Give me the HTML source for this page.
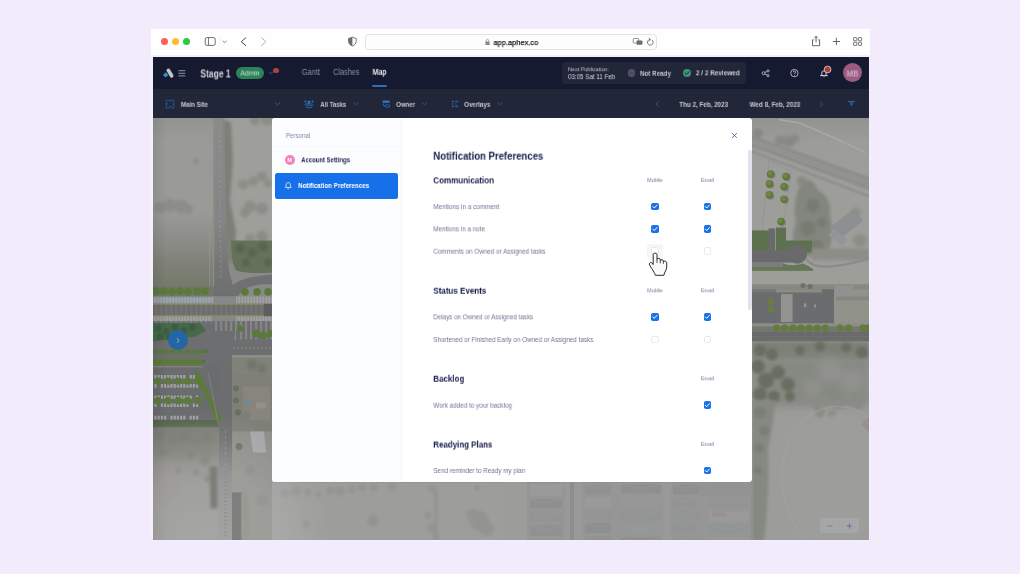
<!DOCTYPE html>
<html>
<head>
<meta charset="utf-8">
<title>Notification Preferences</title>
<style>
html,body{margin:0;padding:0;}
body{width:1020px;height:574px;overflow:hidden;background:#f1ebfb;font-family:"Liberation Sans",sans-serif;position:relative;}
.abs{position:absolute;}
.t{position:absolute;white-space:nowrap;line-height:1;transform-origin:0 50%;will-change:transform;font-family:"Liberation Sans",sans-serif;}
#toolbar{left:151px;top:29.4px;width:719px;height:25.4px;background:#fefefe;}
#nav1{left:153px;top:57.4px;width:716px;height:31.2px;background:#161a31;}
#nav2{left:153px;top:88.5px;width:716px;height:29.3px;background:#222639;}
#map{left:153px;top:117.6px;width:716px;height:422.6px;background:#989995;overflow:hidden;}
#url{left:365.3px;top:34.2px;width:289.6px;height:13.6px;border:0.8px solid #e2e2e4;border-radius:3.5px;background:#fdfdfd;box-sizing:content-box;}
.dot{position:absolute;border-radius:50%;}
#pub{left:562px;top:61.8px;width:184px;height:22.2px;background:#222639;border-radius:3px;}
#modal{left:272.3px;top:117.5px;width:479.9px;height:364.8px;background:#ffffff;border-radius:3px;overflow:hidden;}
#side{left:0;top:0;width:128.5px;height:100%;background:#fcfdfe;border-right:0.6px solid #f6f7fa;}
#btn{left:275.1px;top:172.5px;width:122.7px;height:26.3px;background:#1670e8;border-radius:2.5px;}
.cb{position:absolute;width:7.6px;height:7.6px;border-radius:1.8px;box-sizing:border-box;}
.cb.on{background:#1a73e8;}
.cb.off{background:#fff;border:0.7px solid #e9eaf0;}
svg{position:absolute;overflow:visible;}
</style>
</head>
<body>
<!-- browser toolbar -->
<div class="abs" style="left:151.2px;top:50px;width:718.6px;height:491.4px;background:#f4effc;"></div>
<div id="toolbar" class="abs"></div>
<div class="dot" style="left:161.1px;top:38.2px;width:7px;height:7px;background:#fe5f57;"></div>
<div class="dot" style="left:172.2px;top:38.2px;width:7px;height:7px;background:#febc2e;"></div>
<div class="dot" style="left:183.4px;top:38.2px;width:7px;height:7px;background:#28c840;"></div>
<div id="url" class="abs"></div>
<svg width="1020" height="574" viewBox="0 0 1020 574" style="left:0;top:0">
  <!-- sidebar icon -->
  <rect x="205.2" y="37.6" width="10" height="7.8" rx="1.6" fill="none" stroke="#5d5d5f" stroke-width="0.9"/>
  <line x1="208.5" y1="37.6" x2="208.5" y2="45.4" stroke="#5d5d5f" stroke-width="0.8"/>
  <line x1="219.6" y1="36.5" x2="219.6" y2="46.8" stroke="#ececee" stroke-width="0.6"/>
  <polyline points="222.9,41 224.6,42.7 226.3,41" fill="none" stroke="#6a6a6c" stroke-width="0.8" stroke-linecap="round" stroke-linejoin="round"/>
  <polyline points="245.8,37.8 241.3,41.7 245.8,45.6" fill="none" stroke="#4a4a4c" stroke-width="1" stroke-linecap="round" stroke-linejoin="round"/>
  <polyline points="261.5,37.8 266,41.7 261.5,45.6" fill="none" stroke="#b4b4b6" stroke-width="1" stroke-linecap="round" stroke-linejoin="round"/>
  <!-- shield -->
  <path d="M352.4 37.2 L356.2 38.5 V41.5 C356.2 43.6 354.6 45.2 352.4 46 C350.2 45.2 348.6 43.6 348.6 41.5 V38.5 Z" fill="none" stroke="#5a5a5c" stroke-width="0.8"/>
  <path d="M352.4 37.2 L348.6 38.5 V41.5 C348.6 43.6 350.2 45.2 352.4 46 Z" fill="#6a6a6c"/>
  <!-- lock -->
  <rect x="485.4" y="41.6" width="4.2" height="3.5" rx="0.6" fill="#88888b"/>
  <path d="M486.3 41.8 V40.6 A1.2 1.2 0 0 1 488.7 40.6 V41.8" fill="none" stroke="#88888b" stroke-width="0.7"/>
  <!-- translate -->
  <rect x="633.2" y="38.5" width="5.6" height="4.6" rx="0.8" fill="none" stroke="#6c6c6e" stroke-width="0.7"/>
  <rect x="636.6" y="40.4" width="5.8" height="4.4" rx="0.8" fill="#6c6c6e"/>
  <!-- refresh -->
  <path d="M652.6 40.4 A2.9 2.9 0 1 1 649.6 39.4" fill="none" stroke="#5a5a5c" stroke-width="0.8" stroke-linecap="round"/>
  <polyline points="649,38.2 650.6,39.5 649.3,41" fill="none" stroke="#5a5a5c" stroke-width="0.7" stroke-linecap="round" stroke-linejoin="round"/>
  <!-- share -->
  <path d="M813.9 39.9 H812.5 V45.7 H819.6 V39.9 H818.2" fill="none" stroke="#555557" stroke-width="0.9" stroke-linejoin="round"/>
  <line x1="816.05" y1="36.4" x2="816.05" y2="42.4" stroke="#555557" stroke-width="0.9"/>
  <polyline points="814.4,37.9 816.05,36.3 817.7,37.9" fill="none" stroke="#555557" stroke-width="0.9" stroke-linejoin="round"/>
  <!-- plus -->
  <line x1="832.8" y1="41.5" x2="840" y2="41.5" stroke="#555557" stroke-width="0.9"/>
  <line x1="836.4" y1="37.9" x2="836.4" y2="45.1" stroke="#555557" stroke-width="0.9"/>
  <!-- grid -->
  <rect x="853.6" y="37.6" width="3.2" height="3.2" rx="0.5" fill="none" stroke="#555557" stroke-width="0.8"/>
  <rect x="858.4" y="37.6" width="3.2" height="3.2" rx="0.5" fill="none" stroke="#555557" stroke-width="0.8"/>
  <rect x="853.6" y="42.2" width="3.2" height="3.2" rx="0.5" fill="none" stroke="#555557" stroke-width="0.8"/>
  <rect x="858.4" y="42.2" width="3.2" height="3.2" rx="0.5" fill="none" stroke="#555557" stroke-width="0.8"/>
</svg>

<!-- app nav -->
<div id="nav1" class="abs"></div>
<div id="nav2" class="abs"></div>
<div id="pub" class="abs"></div>
<div class="abs" style="left:235.7px;top:66.9px;width:28.3px;height:12.1px;border-radius:6.1px;background:#2e8259;"></div>
<div class="abs" style="left:372.4px;top:85px;width:14.3px;height:1.8px;background:#2b72b8;border-radius:1px;"></div>
<div class="dot" style="left:273.2px;top:67.8px;width:5.4px;height:5.4px;background:#ab443f;"></div>
<div class="dot" style="left:628.1px;top:69.3px;width:7.4px;height:7.4px;background:#515364;"></div>
<div class="dot" style="left:683.3px;top:69.3px;width:7.4px;height:7.4px;background:#3a9073;"></div>
<div class="dot" style="left:842.9px;top:63.3px;width:19.2px;height:19.2px;background:#9c5b82;"></div>
<svg width="1020" height="574" viewBox="0 0 1020 574" style="left:0;top:0">
  <!-- logo -->
  <line x1="168.4" y1="70.4" x2="171.6" y2="75.8" stroke="#c4c5c9" stroke-width="3.7" stroke-linecap="round"/>
  <path d="M165.7 72.2 L168.4 74.9 L165.7 77.6 L163 74.9 Z" fill="#2b93c6"/>
  <!-- hamburger -->
  <line x1="178.4" y1="70.7" x2="185.3" y2="70.7" stroke="#9d9fac" stroke-width="0.9"/>
  <line x1="178.4" y1="73.3" x2="185.3" y2="73.3" stroke="#9d9fac" stroke-width="0.9"/>
  <line x1="178.4" y1="75.9" x2="185.3" y2="75.9" stroke="#9d9fac" stroke-width="0.9"/>
  <!-- chevron next to admin -->
  <polyline points="269.2,72.2 270.9,73.8 272.6,72.2" fill="none" stroke="#2b6db4" stroke-width="0.8" stroke-linecap="round" stroke-linejoin="round"/>
  <!-- gray dot minus / green check -->
  <line x1="630.2" y1="73" x2="633.4" y2="73" stroke="#3a3d4e" stroke-width="0.9"/>
  <polyline points="685.2,73.1 686.5,74.4 688.9,71.8" fill="none" stroke="#1d2a36" stroke-width="0.9" stroke-linecap="round" stroke-linejoin="round"/>
  <!-- share nodes -->
  <circle cx="763.6" cy="73.2" r="1.5" fill="none" stroke="#c9cad2" stroke-width="0.8"/>
  <circle cx="768" cy="70.9" r="1.1" fill="none" stroke="#c9cad2" stroke-width="0.8"/>
  <circle cx="768" cy="75.6" r="1.1" fill="none" stroke="#c9cad2" stroke-width="0.8"/>
  <line x1="764.9" y1="72.5" x2="766.8" y2="71.5" stroke="#c9cad2" stroke-width="0.8"/>
  <line x1="764.9" y1="73.9" x2="766.8" y2="75" stroke="#c9cad2" stroke-width="0.8"/>
  <!-- help -->
  <circle cx="794.4" cy="73.1" r="3.7" fill="none" stroke="#d0d1d8" stroke-width="0.8"/>
  <path d="M793.2 72.1 A1.2 1.2 0 1 1 794.4 73.4 V74.1" fill="none" stroke="#d0d1d8" stroke-width="0.8"/>
  <circle cx="794.4" cy="75.3" r="0.45" fill="#d0d1d8"/>
  <!-- bell -->
  <path d="M820.5 75.6 H827.3 M821.8 75.6 V73.2 A2.1 2.4 0 0 1 826 73.2 V75.6" fill="none" stroke="#dcdde3" stroke-width="0.95" stroke-linejoin="round" stroke-linecap="round"/>
  <path d="M823.2 76.4 L823.9 77.1 L824.6 76.4" fill="none" stroke="#cfd0d7" stroke-width="0.7"/>
  <circle cx="827.6" cy="69.5" r="3.4" fill="#b03c36" stroke="#d5d5da" stroke-width="0.8"/>
  <!-- nav2 icons -->
  <path d="M166.2 100.3 H174 V108.2 H171.5 V106.6 H169.2 V108.2 H166.2 Z M166.2 104 H168 M172.2 104 H174 M170.1 100.3 V102" fill="none" stroke="#1f5f9f" stroke-width="0.8"/>
  <polyline points="275.3,102.9 277.5,104.9 279.7,102.9" fill="none" stroke="#2566a8" stroke-width="0.8" stroke-linecap="round" stroke-linejoin="round"/>
  <!-- all tasks icon -->
  <circle cx="309" cy="102" r="1.5" fill="#2a72bb"/>
  <circle cx="305.4" cy="101.4" r="1" fill="#2a72bb"/>
  <circle cx="312.6" cy="101.4" r="1" fill="#2a72bb"/>
  <path d="M304.5 104.4 Q309 102.6 313.5 104.4" fill="none" stroke="#2a72bb" stroke-width="0.9"/>
  <ellipse cx="309" cy="106.4" rx="3.1" ry="1.4" fill="none" stroke="#2a72bb" stroke-width="0.9"/>
  <polyline points="353.4,102.9 355.6,104.9 357.8,102.9" fill="none" stroke="#2566a8" stroke-width="0.8" stroke-linecap="round" stroke-linejoin="round"/>
  <!-- owner icon -->
  <rect x="382.4" y="100.4" width="7.4" height="2.6" rx="1" fill="#2a72bb"/>
  <path d="M383.4 103.6 V105.6 H385.4" fill="none" stroke="#2a72bb" stroke-width="0.8"/>
  <ellipse cx="387.6" cy="106" rx="2.2" ry="1.3" fill="none" stroke="#2a72bb" stroke-width="0.8"/>
  <polyline points="422.3,102.9 424.5,104.9 426.7,102.9" fill="none" stroke="#2566a8" stroke-width="0.8" stroke-linecap="round" stroke-linejoin="round"/>
  <!-- overlays icon -->
  <path d="M452.6 101.3 H457.6 L455.2 103.8 L457.6 106.6 H452.6 Z" fill="none" stroke="#1f5f9f" stroke-width="0.8" stroke-linejoin="round"/>
  <circle cx="452.6" cy="101.3" r="0.8" fill="#1f5f9f"/><circle cx="457.6" cy="101.3" r="0.8" fill="#1f5f9f"/>
  <circle cx="452.6" cy="106.6" r="0.8" fill="#1f5f9f"/><circle cx="457.6" cy="106.6" r="0.8" fill="#1f5f9f"/>
  <polyline points="497.4,102.9 499.6,104.9 501.8,102.9" fill="none" stroke="#2566a8" stroke-width="0.8" stroke-linecap="round" stroke-linejoin="round"/>
  <!-- date arrows -->
  <polyline points="658.5,101.7 656.2,104.1 658.5,106.5" fill="none" stroke="#2566a8" stroke-width="0.8" stroke-linecap="round" stroke-linejoin="round"/>
  <polyline points="820.4,101.7 822.7,104.1 820.4,106.5" fill="none" stroke="#2566a8" stroke-width="0.8" stroke-linecap="round" stroke-linejoin="round"/>
  <!-- filter -->
  <path d="M847.8 101 H855.2 L853.6 102.6 H849.4 Z M849.9 103.3 H853.1 L852.2 104.9 H850.8 Z M851 105.5 H852 L851.5 107.2 Z" fill="#2b65a6"/>
</svg>

<!-- map -->
<div id="map" class="abs">
<svg width="716" height="422.6" viewBox="153 117.6 716 422.6" style="left:0;top:0">
<defs>
<filter id="b1" x="-20%" y="-20%" width="140%" height="140%"><feGaussianBlur stdDeviation="0.6"/></filter>
<filter id="b2" x="-20%" y="-20%" width="140%" height="140%"><feGaussianBlur stdDeviation="1.6"/></filter>
<filter id="b4" x="-30%" y="-30%" width="160%" height="160%"><feGaussianBlur stdDeviation="4"/></filter>
<linearGradient id="lf" x1="0" y1="0" x2="0" y2="1"><stop offset="0" stop-color="#acada9"/><stop offset="0.14" stop-color="#b7b8b4"/><stop offset="0.55" stop-color="#b6b7b2"/><stop offset="0.74" stop-color="#a0a29a"/><stop offset="0.88" stop-color="#8d9182"/><stop offset="1" stop-color="#828774"/></linearGradient>
<linearGradient id="lb" x1="0" y1="0" x2="0" y2="1"><stop offset="0" stop-color="#8a8d82"/><stop offset="0.28" stop-color="#9b9c95"/><stop offset="0.5" stop-color="#a9aaa5"/><stop offset="1" stop-color="#abaca8"/></linearGradient>
<linearGradient id="rd" x1="0" y1="0" x2="0" y2="1"><stop offset="0" stop-color="#a0a1a1"/><stop offset="0.25" stop-color="#969797"/><stop offset="0.34" stop-color="#838485"/><stop offset="0.42" stop-color="#77787a"/><stop offset="0.76" stop-color="#747577"/><stop offset="0.86" stop-color="#9a9b9a"/><stop offset="1" stop-color="#a8a9a6"/></linearGradient>
<radialGradient id="hz1" cx="205" cy="535" r="125" gradientUnits="userSpaceOnUse"><stop offset="0" stop-color="#fff" stop-opacity="0.33"/><stop offset="0.55" stop-color="#fff" stop-opacity="0.24"/><stop offset="1" stop-color="#fff" stop-opacity="0"/></radialGradient>
<radialGradient id="hz2" cx="850" cy="545" r="75" gradientUnits="userSpaceOnUse"><stop offset="0" stop-color="#fff" stop-opacity="0.17"/><stop offset="0.6" stop-color="#fff" stop-opacity="0.1"/><stop offset="1" stop-color="#fff" stop-opacity="0"/></radialGradient>
<linearGradient id="rt" x1="0" y1="0" x2="0" y2="1"><stop offset="0" stop-color="#abaca8"/><stop offset="0.16" stop-color="#b9bab6"/><stop offset="1" stop-color="#bbbcb8"/></linearGradient>
<linearGradient id="vg" x1="0" y1="0" x2="1" y2="0"><stop offset="0" stop-color="#000" stop-opacity="0.1"/><stop offset="1" stop-color="#000" stop-opacity="0"/></linearGradient>
<pattern id="hatch" width="3" height="8" patternUnits="userSpaceOnUse"><rect width="3" height="8" fill="#bebfc0"/><rect width="1.3" height="8" fill="#a6a7a8"/></pattern>
<pattern id="vstripe" width="5" height="8" patternUnits="userSpaceOnUse"><rect width="2.4" height="8" fill="#fff" opacity="0.07"/></pattern>
<pattern id="vstripe2" width="5" height="8" patternUnits="userSpaceOnUse"><rect width="2.2" height="8" fill="#fff" opacity="0.25"/></pattern>
<pattern id="cars" width="3.2" height="10" patternUnits="userSpaceOnUse"><rect width="3.2" height="10" fill="#727375"/><rect x="0.4" y="0.3" width="2.2" height="3.7" fill="#c2c3c5"/></pattern>
</defs>
<rect x="153" y="117" width="716" height="424" fill="#a0a19c"/>
<rect x="153" y="117" width="60" height="170" fill="url(#lf)"/>
<g filter="url(#b2)" fill="#a2a49c">
<circle cx="160" cy="207" r="6"/>
<circle cx="170" cy="205" r="7"/>
<circle cx="181" cy="206" r="7"/>
<circle cx="188" cy="209" r="5"/>
<circle cx="196" cy="161" r="3"/>
</g>
<rect x="224" y="117" width="48" height="125" fill="#bcbdb8"/>
<g filter="url(#b2)" fill="#a1a59a">
<circle cx="262" cy="176" r="5"/>
<circle cx="253" cy="181" r="5"/>
<circle cx="243" cy="184" r="5"/>
<circle cx="268" cy="183" r="4"/>
<circle cx="250" cy="206" r="6"/>
<circle cx="262" cy="208" r="6"/>
<circle cx="245" cy="212" r="5"/>
<circle cx="267" cy="119" r="6"/>
<circle cx="255" cy="120" r="5"/>
<circle cx="262" cy="236" r="6"/>
<circle cx="250" cy="238" r="5"/>
</g>
<path d="M223 118 L231 122 L233 160 L230 200 L236 230 L234 262 L224 262 Z" fill="#8c9186" filter="url(#b2)"/>
<path d="M231 240 H272 V272 Q250 274 236 270 Q231 262 231 240 Z" fill="#6c7c5c" filter="url(#b1)"/>
<g filter="url(#b2)" fill="#596b4c">
<circle cx="240" cy="248" r="5"/>
<circle cx="252" cy="252" r="5"/>
<circle cx="263" cy="246" r="5"/>
<circle cx="246" cy="262" r="4"/>
<circle cx="268" cy="262" r="4"/>
</g>
<line x1="209.8" y1="118" x2="209.8" y2="287" stroke="#b3b4ad" stroke-width="0.7"/>
<line x1="213.2" y1="118" x2="213.2" y2="287" stroke="#aeb0a9" stroke-width="0.5"/>
<path d="M215.6 117 H223 L226 240 L229 270 L236 296 L236 322 L234 345 L232.3 372 L232.3 541 H218.6 L218.6 430 L214 372 L211 340 L211 322 L214 296 L214.4 240 Z" fill="url(#rd)"/>
<line x1="219.6" y1="130" x2="220.8" y2="280" stroke="#c4c5c5" stroke-width="0.6" stroke-dasharray="2 3"/>
<line x1="225.5" y1="430" x2="225.5" y2="520" stroke="#b6b7b7" stroke-width="0.6" stroke-dasharray="2.5 3"/>
<path d="M229 292 Q231 277 272 274 V284 Q244 283 238 296 Z" fill="#787a7b"/>
<rect x="153" y="286" width="61" height="11" fill="#7d8475"/>
<g fill="#5d8733" filter="url(#b1)">
<circle cx="156" cy="290.8" r="4"/>
<circle cx="164" cy="290.6" r="4"/>
<circle cx="172" cy="291.2" r="4"/>
<circle cx="180" cy="290.5" r="4"/>
<circle cx="188" cy="291.0" r="4"/>
<circle cx="197" cy="290.8" r="4"/>
<circle cx="205" cy="290.5" r="4"/>
<circle cx="245" cy="291.5" r="3.8"/>
<circle cx="257" cy="291.5" r="3.8"/>
<circle cx="268" cy="291.5" r="3.8"/>
</g>
<rect x="153" y="296.2" width="119" height="7.4" fill="url(#hatch)"/>
<rect x="153" y="298.2" width="58.5" height="3.4" fill="#a6cbea" opacity="0.55"/>
<rect x="153" y="303.4" width="119" height="12.4" fill="#757678"/>
<rect x="153" y="303.4" width="119" height="12.4" fill="url(#vstripe)"/>
<rect x="153" y="303.3" width="112" height="1.3" fill="#9e9653"/>
<rect x="153" y="314.5" width="112" height="1.3" fill="#9e9653"/>
<rect x="153" y="315.9" width="119" height="4.8" fill="url(#hatch)"/>
<rect x="153" y="320.7" width="119" height="10" fill="#757678"/>
<rect x="153" y="320.7" width="119" height="10" fill="url(#vstripe2)"/>
<rect x="214" y="296.2" width="22" height="7.2" fill="#9a9b9c"/>
<rect x="212" y="315.9" width="24" height="4.8" fill="#9a9b9c"/>
<rect x="264" y="303.4" width="8" height="12.4" fill="#5f6062"/>
<rect x="153" y="322" width="61" height="50" fill="#767779"/>
<path d="M153 322.5 H200 L206 330 L196 336 L153 341 Z" fill="#3e7043" filter="url(#b1)"/>
<g fill="#305f37" filter="url(#b1)">
<circle cx="158" cy="328" r="3.4"/>
<circle cx="166" cy="331" r="3.4"/>
<circle cx="175" cy="327" r="3.4"/>
<circle cx="184" cy="330" r="3.4"/>
<circle cx="192" cy="327" r="3.4"/>
<circle cx="160" cy="336" r="3.4"/>
<circle cx="170" cy="337" r="3.4"/>
</g>
<rect x="153" y="349.6" width="55" height="3" fill="#61793f"/>
<rect x="153" y="359.5" width="52" height="3.4" fill="#557a3f"/>
<g fill="#5d8a2c" filter="url(#b1)">
<circle cx="160" cy="351.7" r="2.6"/>
<circle cx="168" cy="351.7" r="2.6"/>
<circle cx="176" cy="351.7" r="2.6"/>
<circle cx="184" cy="351.7" r="2.6"/>
<circle cx="192" cy="351.7" r="2.6"/>
<circle cx="200" cy="351.7" r="2.6"/>
<circle cx="157" cy="361.8" r="3.4"/>
<circle cx="164" cy="361.8" r="3.4"/>
<circle cx="171" cy="361.8" r="3.4"/>
<circle cx="178" cy="361.8" r="3.4"/>
<circle cx="185" cy="361.8" r="3.4"/>
<circle cx="192" cy="361.8" r="3.4"/>
<circle cx="199" cy="361.8" r="3.4"/>
</g>
<rect x="236" y="330" width="36" height="11" fill="#757678"/>
<rect x="238" y="330" width="34" height="9" fill="url(#vstripe2)"/>
<rect x="230.6" y="340" width="42" height="15" fill="#767779"/>
<line x1="233" y1="347.5" x2="272" y2="347.5" stroke="#b5b6b6" stroke-width="0.6" stroke-dasharray="2 2"/>
<g fill="#5d8733" filter="url(#b1)">
<circle cx="240" cy="328" r="3.2"/>
<circle cx="256" cy="333" r="4"/>
<circle cx="263" cy="335" r="4"/>
<circle cx="270" cy="333" r="3.5"/>
</g>
<rect x="232" y="355" width="40" height="18" fill="#8f9484"/>
<rect x="232" y="355" width="40" height="2" fill="#a8a9a6"/>
<g filter="url(#b2)" fill="#7c836f"><circle cx="252" cy="364" r="5"/><circle cx="262" cy="368" r="4"/></g>
<rect x="153" y="366" width="66" height="61" fill="#737476"/>
<rect x="153" y="366" width="50" height="0.8" fill="#a9aaaa"/>
<path d="M154.4 374.6h2.2v3.7h-2.2zM157.6 374.6h2.2v3.7h-2.2zM160.8 374.6h2.2v3.7h-2.2zM164.0 374.6h2.2v3.7h-2.2zM167.2 374.6h2.2v3.7h-2.2zM170.4 374.6h2.2v3.7h-2.2zM173.6 374.6h2.2v3.7h-2.2zM176.8 374.6h2.2v3.7h-2.2zM180.0 374.6h2.2v3.7h-2.2zM183.2 374.6h2.2v3.7h-2.2zM189.6 374.6h2.2v3.7h-2.2zM192.8 374.6h2.2v3.7h-2.2zM154.4 383.7h2.2v3.7h-2.2zM160.8 383.7h2.2v3.7h-2.2zM164.0 383.7h2.2v3.7h-2.2zM167.2 383.7h2.2v3.7h-2.2zM170.4 383.7h2.2v3.7h-2.2zM173.6 383.7h2.2v3.7h-2.2zM176.8 383.7h2.2v3.7h-2.2zM180.0 383.7h2.2v3.7h-2.2zM183.2 383.7h2.2v3.7h-2.2zM186.4 383.7h2.2v3.7h-2.2zM189.6 383.7h2.2v3.7h-2.2zM192.8 383.7h2.2v3.7h-2.2zM196.0 383.7h2.2v3.7h-2.2zM154.4 395h2.2v3.7h-2.2zM157.6 395h2.2v3.7h-2.2zM160.8 395h2.2v3.7h-2.2zM164.0 395h2.2v3.7h-2.2zM167.2 395h2.2v3.7h-2.2zM170.4 395h2.2v3.7h-2.2zM173.6 395h2.2v3.7h-2.2zM176.8 395h2.2v3.7h-2.2zM180.0 395h2.2v3.7h-2.2zM183.2 395h2.2v3.7h-2.2zM186.4 395h2.2v3.7h-2.2zM189.6 395h2.2v3.7h-2.2zM196.0 395h2.2v3.7h-2.2zM154.4 403h2.2v3.7h-2.2zM160.8 403h2.2v3.7h-2.2zM164.0 403h2.2v3.7h-2.2zM167.2 403h2.2v3.7h-2.2zM170.4 403h2.2v3.7h-2.2zM173.6 403h2.2v3.7h-2.2zM176.8 403h2.2v3.7h-2.2zM180.0 403h2.2v3.7h-2.2zM183.2 403h2.2v3.7h-2.2zM186.4 403h2.2v3.7h-2.2zM192.8 403h2.2v3.7h-2.2zM196.0 403h2.2v3.7h-2.2zM154.4 415.4h2.2v3.7h-2.2zM157.6 415.4h2.2v3.7h-2.2zM160.8 415.4h2.2v3.7h-2.2zM164.0 415.4h2.2v3.7h-2.2zM170.4 415.4h2.2v3.7h-2.2zM173.6 415.4h2.2v3.7h-2.2zM176.8 415.4h2.2v3.7h-2.2zM180.0 415.4h2.2v3.7h-2.2zM183.2 415.4h2.2v3.7h-2.2zM189.6 415.4h2.2v3.7h-2.2zM192.8 415.4h2.2v3.7h-2.2zM196.0 415.4h2.2v3.7h-2.2z" fill="#bfc0c2"/>
<g fill="#5d8a2c" filter="url(#b1)">
<circle cx="158" cy="380.7" r="3.7"/>
<circle cx="168" cy="380.7" r="3.7"/>
<circle cx="178.3" cy="380.7" r="3.7"/>
<circle cx="187.4" cy="380.7" r="3.7"/>
<circle cx="197.6" cy="380.7" r="3.7"/>
<circle cx="158" cy="400.4" r="3.7"/>
<circle cx="168" cy="400.4" r="3.7"/>
<circle cx="178.3" cy="400.4" r="3.7"/>
<circle cx="187.4" cy="400.4" r="3.7"/>
<circle cx="197.6" cy="400.4" r="3.7"/>
<circle cx="198.0" cy="375.5" r="3.3"/>
<circle cx="201.3" cy="382.5" r="3.3"/>
<circle cx="204.7" cy="389.5" r="3.3"/>
<circle cx="208.0" cy="396.5" r="3.3"/>
<circle cx="211.3" cy="403.5" r="3.3"/>
<circle cx="214.7" cy="410.5" r="3.3"/>
<circle cx="218.0" cy="417.5" r="3.3"/>
</g>
<path d="M153 419.7 H216 L218.6 427 H153 Z" fill="#506b46"/>
<path d="M208 372 Q212 390 217.6 420" fill="none" stroke="#a3a4a4" stroke-width="0.6"/>
<rect x="232.3" y="431" width="40" height="110" fill="#a4a59f"/>
<rect x="232.3" y="373" width="40" height="58" fill="#8e9085"/>
<path d="M243 386 H270 V420 H250 V410 H243 Z" fill="#9c988b" filter="url(#b1)"/>
<rect x="244.5" y="398" width="6" height="6.5" fill="#7f9cb0"/>
<rect x="256" y="402" width="10" height="6" fill="#a9a69c"/>
<path d="M250 431 H264 L266 452 H253 Z" fill="#c6c9cb" filter="url(#b1)"/>
<g filter="url(#b1)" fill="#6f7a62"><circle cx="236" cy="388" r="3"/><circle cx="236" cy="400" r="3"/><circle cx="238" cy="412" r="3"/><circle cx="239" cy="446" r="3.5"/></g>
<rect x="153" y="427" width="65.6" height="114" fill="url(#lb)"/>
<rect x="153" y="428" width="65" height="30" fill="#858a7c" filter="url(#b4)" opacity="0.75"/>
<g filter="url(#b2)" fill="#7f8476" opacity="0.7">
<circle cx="160" cy="436" r="4"/>
<circle cx="172" cy="440" r="4"/>
<circle cx="185" cy="437" r="5"/>
<circle cx="197" cy="441" r="4"/>
<circle cx="208" cy="438" r="4"/>
<circle cx="164" cy="452" r="4"/>
<circle cx="190" cy="455" r="4"/>
<circle cx="205" cy="460" r="5"/>
<circle cx="208" cy="478" r="4"/>
<circle cx="196" cy="472" r="3"/>
<circle cx="178" cy="470" r="3"/>
</g>
<ellipse cx="166" cy="482" rx="12" ry="24" fill="#a79d98" opacity="0.55" filter="url(#b4)"/>
<g filter="url(#b2)" fill="#989a93"><circle cx="250" cy="470" r="5"/><circle cx="262" cy="500" r="6"/></g>
<rect x="272" y="482" width="250" height="59" fill="#bbbcb9"/>
<g filter="url(#b2)" fill="#adaeab">
<circle cx="285" cy="493" r="4"/>
<circle cx="296" cy="491" r="5"/>
<circle cx="308" cy="492" r="4"/>
<circle cx="318" cy="494" r="3"/>
<circle cx="330" cy="490" r="4"/>
<circle cx="340" cy="491" r="5"/>
<circle cx="352" cy="489" r="4"/>
<circle cx="362" cy="487" r="4"/>
<circle cx="374" cy="487" r="4"/>
<circle cx="392" cy="487" r="4"/>
<circle cx="432" cy="488" r="4"/>
<circle cx="477" cy="487" r="3"/>
<circle cx="306" cy="524" r="4"/>
<circle cx="373" cy="520" r="6"/>
<circle cx="479" cy="520" r="10"/>
<circle cx="486" cy="528" r="8"/>
<circle cx="472" cy="514" r="6"/>
<circle cx="428" cy="515" r="4"/>
<circle cx="432" cy="527" r="5"/>
<circle cx="436" cy="537" r="4"/>
<rect x="434" y="490" width="4" height="50" />
</g>
<rect x="520" y="482" width="232" height="59" fill="#b0b1b0"/>
<rect x="505" y="482" width="22" height="59" fill="#b9bab7"/>
<g filter="url(#b1)">
<rect x="530" y="484" width="32" height="11" fill="#b6b7b7"/>
<path d="M530 484 L546.0 489.5 L562 484" fill="none" stroke="#bbbcbb" stroke-width="0.4"/>
<rect x="530" y="498.5" width="32" height="9" fill="#a5a6a6"/>
<path d="M530 498.5 L546.0 503.0 L562 498.5" fill="none" stroke="#bbbcbb" stroke-width="0.4"/>
<rect x="530" y="511.0" width="32" height="10" fill="#adaeae"/>
<path d="M530 511.0 L546.0 516.0 L562 511.0" fill="none" stroke="#bbbcbb" stroke-width="0.4"/>
<rect x="530" y="524.5" width="32" height="11" fill="#a9aaaa"/>
<path d="M530 524.5 L546.0 530.0 L562 524.5" fill="none" stroke="#bbbcbb" stroke-width="0.4"/>
<rect x="585" y="484" width="26" height="10" fill="#a9aaaa"/>
<path d="M585 484 L598.0 489.0 L611 484" fill="none" stroke="#bbbcbb" stroke-width="0.4"/>
<rect x="585" y="497.5" width="26" height="9" fill="#b6b7b7"/>
<path d="M585 497.5 L598.0 502.0 L611 497.5" fill="none" stroke="#bbbcbb" stroke-width="0.4"/>
<rect x="585" y="510.0" width="26" height="9" fill="#adaeae"/>
<path d="M585 510.0 L598.0 514.5 L611 510.0" fill="none" stroke="#bbbcbb" stroke-width="0.4"/>
<rect x="585" y="522.5" width="26" height="10" fill="#a5a6a6"/>
<path d="M585 522.5 L598.0 527.5 L611 522.5" fill="none" stroke="#bbbcbb" stroke-width="0.4"/>
<rect x="585" y="536.0" width="26" height="10" fill="#a9aaaa"/>
<path d="M585 536.0 L598.0 541.0 L611 536.0" fill="none" stroke="#bbbcbb" stroke-width="0.4"/>
<rect x="621" y="484" width="40" height="9" fill="#a5a6a6"/>
<path d="M621 484 L641.0 488.5 L661 484" fill="none" stroke="#bbbcbb" stroke-width="0.4"/>
<rect x="621" y="496.5" width="40" height="10" fill="#b1b2b2"/>
<path d="M621 496.5 L641.0 501.5 L661 496.5" fill="none" stroke="#bbbcbb" stroke-width="0.4"/>
<rect x="621" y="510.0" width="40" height="10" fill="#adaeae"/>
<path d="M621 510.0 L641.0 515.0 L661 510.0" fill="none" stroke="#bbbcbb" stroke-width="0.4"/>
<rect x="621" y="523.5" width="40" height="10" fill="#b1b2b2"/>
<path d="M621 523.5 L641.0 528.5 L661 523.5" fill="none" stroke="#bbbcbb" stroke-width="0.4"/>
<rect x="621" y="537.0" width="40" height="10" fill="#a5a6a6"/>
<path d="M621 537.0 L641.0 542.0 L661 537.0" fill="none" stroke="#bbbcbb" stroke-width="0.4"/>
<rect x="673" y="484" width="26" height="10" fill="#a5a6a6"/>
<path d="M673 484 L686.0 489.0 L699 484" fill="none" stroke="#bbbcbb" stroke-width="0.4"/>
<rect x="673" y="497.5" width="26" height="9" fill="#adaeae"/>
<path d="M673 497.5 L686.0 502.0 L699 497.5" fill="none" stroke="#bbbcbb" stroke-width="0.4"/>
<rect x="673" y="510.0" width="26" height="9" fill="#adaeae"/>
<path d="M673 510.0 L686.0 514.5 L699 510.0" fill="none" stroke="#bbbcbb" stroke-width="0.4"/>
<rect x="673" y="522.5" width="26" height="9" fill="#adaeae"/>
<path d="M673 522.5 L686.0 527.0 L699 522.5" fill="none" stroke="#bbbcbb" stroke-width="0.4"/>
<rect x="673" y="535.0" width="26" height="11" fill="#adaeae"/>
<path d="M673 535.0 L686.0 540.5 L699 535.0" fill="none" stroke="#bbbcbb" stroke-width="0.4"/>
<rect x="709" y="484" width="40" height="9" fill="#a5a6a6"/>
<path d="M709 484 L729.0 488.5 L749 484" fill="none" stroke="#bbbcbb" stroke-width="0.4"/>
<rect x="709" y="496.5" width="40" height="11" fill="#adaeae"/>
<path d="M709 496.5 L729.0 502.0 L749 496.5" fill="none" stroke="#bbbcbb" stroke-width="0.4"/>
<rect x="709" y="511.0" width="40" height="10" fill="#b6b7b7"/>
<path d="M709 511.0 L729.0 516.0 L749 511.0" fill="none" stroke="#bbbcbb" stroke-width="0.4"/>
<rect x="709" y="524.5" width="40" height="9" fill="#adaeae"/>
<path d="M709 524.5 L729.0 529.0 L749 524.5" fill="none" stroke="#bbbcbb" stroke-width="0.4"/>
<rect x="709" y="537.0" width="40" height="10" fill="#b1b2b2"/>
<path d="M709 537.0 L729.0 542.0 L749 537.0" fill="none" stroke="#bbbcbb" stroke-width="0.4"/>
<rect x="565" y="482" width="17" height="59" fill="#b4b5b4"/>
<rect x="663" y="482" width="8" height="59" fill="#b4b5b4"/>
<rect x="570" y="482" width="4" height="59" fill="#a3a4a4"/>
<rect x="700" y="484" width="50" height="12" fill="#abacac"/>
<rect x="712" y="512" width="14" height="4" fill="#b8aaa2"/>
</g>
<rect x="752" y="117" width="117" height="154" fill="url(#rt)"/>
<path d="M752 134 L869 176 V190 L752 147 Z" fill="#abaca8" filter="url(#b1)"/>
<path d="M752 137 L869 179 M752 144.5 L869 187" stroke="#9d9e9a" stroke-width="0.9" fill="none"/>
<path d="M752 151 L869 196" stroke="#adaeaa" stroke-width="3.5" fill="none" filter="url(#b1)"/>
<path d="M779 119.4 L799 122.3 L832 136.6 L866 152.3" stroke="#cbccc8" stroke-width="1.4" fill="none" filter="url(#b1)"/>
<g filter="url(#b2)" fill="#9c9e98"><circle cx="780" cy="140" r="5"/><circle cx="789" cy="141" r="6"/><circle cx="795" cy="138" r="4"/><circle cx="758" cy="133" r="5"/><circle cx="802" cy="181" r="5"/><circle cx="809" cy="185" r="5"/></g>
<path d="M769 160 L791 171 L782 232 L762 232 Z" fill="none" stroke="#8b8c86" stroke-width="0.5" stroke-dasharray="1 1"/>
<g filter="url(#b1)">
<circle cx="771.8000000000001" cy="174.7" r="3.7" fill="#8f9288"/>
<circle cx="770.6" cy="173.5" r="3.7" fill="#5f7e2c"/>
<circle cx="770.1" cy="172.9" r="2.5" fill="#789a35"/>
<circle cx="787.2" cy="177.2" r="3.7" fill="#8f9288"/>
<circle cx="786" cy="176" r="3.7" fill="#5f7e2c"/>
<circle cx="785.5" cy="175.4" r="2.5" fill="#789a35"/>
<circle cx="770.6" cy="184.5" r="3.7" fill="#8f9288"/>
<circle cx="769.4" cy="183.3" r="3.7" fill="#5f7e2c"/>
<circle cx="768.9" cy="182.70000000000002" r="2.5" fill="#789a35"/>
<circle cx="785.2" cy="187.39999999999998" r="3.7" fill="#8f9288"/>
<circle cx="784" cy="186.2" r="3.7" fill="#5f7e2c"/>
<circle cx="783.5" cy="185.6" r="2.5" fill="#789a35"/>
<circle cx="770.6" cy="195.5" r="3.7" fill="#8f9288"/>
<circle cx="769.4" cy="194.3" r="3.7" fill="#5f7e2c"/>
<circle cx="768.9" cy="193.70000000000002" r="2.5" fill="#789a35"/>
<circle cx="785.2" cy="199.89999999999998" r="3.7" fill="#8f9288"/>
<circle cx="784" cy="198.7" r="3.7" fill="#5f7e2c"/>
<circle cx="783.5" cy="198.1" r="2.5" fill="#789a35"/>
<circle cx="782.2" cy="222.2" r="3.7" fill="#8f9288"/>
<circle cx="781" cy="221" r="3.7" fill="#5f7e2c"/>
<circle cx="780.5" cy="220.4" r="2.5" fill="#789a35"/>
</g>
<path d="M800 186 Q812 176 818 190 Q832 196 830 216 Q836 236 826 256 H796 Q790 236 796 222 Q792 200 800 186 Z" fill="#959a8e" filter="url(#b2)"/>
<g filter="url(#b2)" fill="#858b7c"><circle cx="813" cy="205" r="7"/><circle cx="808" cy="228" r="8"/><circle cx="816" cy="246" r="7"/><circle cx="822" cy="222" r="5"/></g>
<g filter="url(#b1)"><rect x="-15" y="-8" width="30" height="15" transform="translate(847,224) rotate(-38)" fill="#a3a8ac"/><rect x="-9" y="-4" width="18" height="8" transform="translate(838,237) rotate(38)" fill="#adb1b4"/></g>
<g filter="url(#b2)" fill="#a3a69c"><circle cx="860" cy="240" r="7"/><circle cx="856" cy="212" r="5"/></g>
<rect x="752" y="230" width="18" height="21" fill="#5f7c4c" filter="url(#b1)"/>
<path d="M776 227 H786 V240 H812 V252 H776 Z" fill="#5f7c4c" filter="url(#b1)"/>
<rect x="768.6" y="228" width="6.6" height="24" fill="#717274"/>
<rect x="752" y="249.8" width="46" height="12.4" fill="#717274"/>
<circle cx="797.4" cy="253.6" r="9.7" fill="#717274"/>
<rect x="752" y="262" width="31" height="4.4" fill="#8b8c8c"/>
<path d="M752 266.4 H783 V263 Q792 266.5 803 263 Q808 265 813 268.5 V270.5 H752 Z" fill="#6c8458" filter="url(#b1)"/>
<path d="M806 258 Q812 268 832 266 Q852 264 869 258" fill="none" stroke="#a0a19d" stroke-width="2.2"/>
<rect x="812" y="248" width="57" height="12" fill="#a2a59a" filter="url(#b2)"/>
<rect x="752" y="270.5" width="117" height="13.8" fill="#bbbcb4"/>
<rect x="752" y="284" width="117" height="5.4" fill="#9a9e8e"/>
<g filter="url(#b1)" fill="#767b68"><circle cx="803" cy="285" r="2.5"/><circle cx="810" cy="286" r="2.5"/></g>
<rect x="834" y="289" width="35" height="38" fill="#aaad9f"/>
<path d="M752 293.5 H776 V288.8 H752 Z" fill="#828384"/>
<path d="M752 292 H822 V288.8 H834 V323 H752 Z" fill="#737476"/>
<rect x="781" y="293.7" width="11.6" height="28" fill="#acada9"/>
<rect x="835" y="285" width="18.5" height="7.4" fill="#a9aaa9"/>
<rect x="836" y="296" width="33" height="4" fill="#999b94"/>
<g filter="url(#b1)" fill="#6f8a3c"><circle cx="771" cy="301" r="3.5"/><circle cx="771" cy="308.5" r="3.5"/></g>
<rect x="804" y="303" width="2.4" height="4" fill="#aaabab"/><rect x="814" y="304" width="2" height="3" fill="#aaabab"/>
<rect x="752" y="323" width="117" height="3" fill="#a3a4a1"/>
<rect x="752" y="326" width="117" height="5.5" fill="#80857a"/>
<g filter="url(#b1)" fill="#688c2e">
<circle cx="776.7" cy="327.8" r="3.6"/>
<circle cx="784.8" cy="327.8" r="3.6"/>
<circle cx="793.0" cy="327.8" r="3.6"/>
<circle cx="801.1" cy="327.8" r="3.6"/>
<circle cx="809.2" cy="327.8" r="3.6"/>
<circle cx="817.4" cy="327.8" r="3.6"/>
<circle cx="825.5" cy="327.8" r="3.6"/>
<circle cx="840.0" cy="327.8" r="3.6"/>
<circle cx="848.7" cy="327.8" r="3.6"/>
<circle cx="863.0" cy="327.8" r="3.6"/>
<circle cx="868.0" cy="327.8" r="3.6"/>
</g>
<rect x="752" y="331.5" width="117" height="9.8" fill="#707173"/>
<line x1="752" y1="336.4" x2="869" y2="336.4" stroke="#88898a" stroke-width="0.5"/>
<rect x="752" y="341.3" width="117" height="200" fill="#b9bab6"/>
<rect x="752" y="341.3" width="117" height="18" fill="#8b9182" filter="url(#b2)"/>
<rect x="752" y="356" width="117" height="50" fill="#9a9d94" filter="url(#b4)"/>
<g filter="url(#b2)" fill="#6f7865">
<circle cx="760" cy="350" r="6"/>
<circle cx="772" cy="354" r="6"/>
<circle cx="758" cy="366" r="7"/>
<circle cx="766" cy="380" r="8"/>
<circle cx="778" cy="372" r="7"/>
<circle cx="788" cy="384" r="7"/>
<circle cx="760" cy="394" r="7"/>
<circle cx="774" cy="396" r="6"/>
<circle cx="790" cy="396" r="5"/>
<circle cx="800" cy="350" r="5"/>
<circle cx="820" cy="346" r="5"/>
<circle cx="846" cy="347" r="5"/>
<circle cx="862" cy="352" r="6"/>
</g>
<g filter="url(#b4)" fill="#a9aba4">
<circle cx="830" cy="370" r="12"/>
<circle cx="852" cy="380" r="12"/>
<circle cx="812" cy="388" r="9"/>
</g>
<g filter="url(#b2)" fill="#9fa299">
<circle cx="806" cy="398" r="5"/>
<circle cx="816" cy="404" r="5"/>
<circle cx="826" cy="400" r="5"/>
<circle cx="838" cy="404" r="5"/>
<circle cx="848" cy="398" r="5"/>
<circle cx="858" cy="404" r="5"/>
<circle cx="820" cy="412" r="5"/>
<circle cx="832" cy="414" r="4"/>
</g>
<path d="M752 400 H776 Q772 430 768 450 Q770 490 764 541 H752 Z" fill="#9a9e94" filter="url(#b2)"/>
<g filter="url(#b2)" fill="#888e80"><circle cx="760" cy="412" r="6"/><circle cx="764" cy="430" r="5"/><circle cx="759" cy="448" r="5"/><circle cx="758" cy="470" r="4"/></g>
<ellipse cx="838" cy="478" rx="56" ry="72" fill="none" stroke="#c6c7c3" stroke-width="1.1" opacity="0.55"/>
<ellipse cx="838" cy="478" rx="50" ry="64" fill="#bcbdb9" opacity="0.6"/>
<path d="M861 424 L869 416 V432 Z" fill="#b8a6a1"/>
<rect x="153" y="117" width="14" height="424" fill="url(#vg)"/>
<rect x="153" y="400" width="250" height="141" fill="url(#hz1)"/>
<rect x="232" y="492" width="9.5" height="49" fill="#8f908c" filter="url(#b1)"/>
<rect x="242" y="492" width="7" height="49" fill="#b1b3a4" opacity="0.6" filter="url(#b2)"/>
<path d="M209.5 466 H217.5 V508 H210.5 Z" fill="#8b9083" filter="url(#b2)"/>
<line x1="225.5" y1="470" x2="225.5" y2="538" stroke="#9a9b9a" stroke-width="3" stroke-dasharray="1.2 2.6" opacity="0.6"/>
<rect x="153" y="117" width="716" height="424" fill="#5a5a5a" opacity="0.3"/>
</svg>
</div>
<!-- map controls -->
<div class="dot" style="left:168.1px;top:330.45px;width:19.9px;height:19.9px;background:#2465a5;"></div>
<div class="abs" style="left:820px;top:517.7px;width:39px;height:15.8px;border-radius:2px;background:#a5a6a6;"></div>
<svg width="1020" height="574" viewBox="0 0 1020 574" style="left:0;top:0">
  <polyline points="177.1,338.6 179.2,340.5 177.1,342.4" fill="none" stroke="#b9c3cf" stroke-width="0.85" stroke-linecap="round" stroke-linejoin="round"/>
  <line x1="827.4" y1="526" x2="832.6" y2="526" stroke="#7c7e96" stroke-width="0.9"/>
  <line x1="846.8" y1="526" x2="852" y2="526" stroke="#6a6c94" stroke-width="0.9"/>
  <line x1="849.4" y1="523.4" x2="849.4" y2="528.6" stroke="#6a6c94" stroke-width="0.9"/>
</svg>

<!-- modal -->
<div id="modal" class="abs">
  <div id="side" class="abs"></div>
  <div class="abs" style="left:0;top:28.4px;width:128.5px;height:0.6px;background:#f7f8fb;"></div>
  <div class="abs" style="left:475.9px;top:32.4px;width:3.4px;height:159.8px;border-radius:1.7px;background:#e1e1ee;"></div>
</div>
<div id="btn" class="abs"></div>
<div class="dot" style="left:284.6px;top:154.9px;width:10px;height:10px;background:#f57fc0;"></div>
<div class="abs" style="left:647.3px;top:244.1px;width:15.7px;height:15px;border-radius:2px;background:#f6f6f9;"></div>

<!-- checkboxes -->
<div class="cb on" style="left:651.1px;top:202.7px"></div><div class="cb on" style="left:703.5px;top:202.7px"></div>
<div class="cb on" style="left:651.1px;top:225.2px"></div><div class="cb on" style="left:703.5px;top:225.2px"></div>
<div class="cb off" style="left:651.1px;top:247.3px"></div><div class="cb off" style="left:703.5px;top:247.3px"></div>
<div class="cb on" style="left:651.1px;top:313px"></div><div class="cb on" style="left:703.5px;top:313px"></div>
<div class="cb off" style="left:651.1px;top:335.7px"></div><div class="cb off" style="left:703.5px;top:335.7px"></div>
<div class="cb on" style="left:703.5px;top:401.4px"></div>
<div class="cb on" style="left:703.5px;top:466.7px"></div>

<svg width="1020" height="574" viewBox="0 0 1020 574" style="left:0;top:0">
  <defs>
    <polyline id="ck" points="-2,0.1 -0.6,1.5 2.1,-1.4" fill="none" stroke="#fff" stroke-width="1" stroke-linecap="round" stroke-linejoin="round"/>
  </defs>
  <use href="#ck" x="654.9" y="206.5"/><use href="#ck" x="707.3" y="206.5"/>
  <use href="#ck" x="654.9" y="229"/><use href="#ck" x="707.3" y="229"/>
  <use href="#ck" x="654.9" y="316.8"/><use href="#ck" x="707.3" y="316.8"/>
  <use href="#ck" x="707.3" y="405.2"/>
  <use href="#ck" x="707.3" y="470.5"/>
  <!-- close X -->
  <line x1="731.9" y1="133" x2="736.9" y2="138" stroke="#474c88" stroke-width="0.8"/>
  <line x1="736.9" y1="133" x2="731.9" y2="138" stroke="#474c88" stroke-width="0.8"/>
  <!-- bell in button -->
  <path d="M285.3 187.4 C286.3 186.4 285.9 184.3 286.7 183.3 C287.4 182.3 289.1 182.3 289.8 183.3 C290.6 184.3 290.2 186.4 291.2 187.4 Z" fill="none" stroke="#fff" stroke-width="0.75" stroke-linejoin="round"/>
  <path d="M287.5 188.5 A0.8 0.8 0 0 0 289 188.5" fill="none" stroke="#fff" stroke-width="0.7"/>
  <!-- hand cursor -->
  <path d="M653.2 254.3 C653.2 252.7 657 252.7 657 254.3 V259.2 C657.6 258.1 660.3 258.3 660.3 259.6 V260.3 C660.9 259.4 663.4 259.6 663.4 260.9 V261.6 C664.2 260.8 666.7 261.2 666.7 262.6 V267.2 C666.7 270 664.4 271.8 663.9 275.3 H655.4 C654.8 273 652.3 269.6 649.6 265 C648.6 263.2 650.6 261.6 651.8 262.9 L653.2 264.6 Z" fill="#fbfbfb" stroke="#1f1f1f" stroke-width="0.95" stroke-linejoin="round"/>
  <path d="M657 259.2 V262.6 M660.3 260.3 V263 M663.4 261.6 V263.4" stroke="#1f1f1f" stroke-width="0.8" stroke-linecap="round" fill="none"/>
</svg>

<!-- text -->
<span class="t" style="left:493px;top:39px;font-size:7.6px;font-weight:normal;color:#1d1d1f;transform:translate3d(0.50px,0.00px,0) scaleX(0.9801);-webkit-text-stroke:0.25px #1d1d1f;">app.aphex.co</span>
<span class="t" style="left:200px;top:68px;font-size:10.6px;font-weight:bold;color:#d6d6db;transform:translate3d(0.40px,0.39px,0) scaleX(0.8013);">Stage 1</span>
<span class="t" style="left:240px;top:69px;font-size:7.3px;font-weight:normal;color:#c4e2d2;transform:translate3d(0.40px,0.50px,0) scaleX(0.9281);">Admin</span>
<span class="t" style="left:301px;top:68px;font-size:8.2px;font-weight:normal;color:#9093a4;transform:translate3d(0.80px,0.87px,0) scaleX(0.9086);">Gantt</span>
<span class="t" style="left:333px;top:68px;font-size:8.2px;font-weight:normal;color:#9093a4;transform:translate3d(0.20px,0.87px,0) scaleX(0.8853);">Clashes</span>
<span class="t" style="left:372px;top:67px;font-size:8.3px;font-weight:bold;color:#e6e6ea;transform:translate3d(0.60px,0.86px,0) scaleX(0.8429);">Map</span>
<span class="t" style="left:568px;top:66px;font-size:6px;font-weight:normal;color:#c3c4cd;transform:translate3d(0.00px,0.20px,0) scaleX(0.9105);">Next Publication:</span>
<span class="t" style="left:568px;top:73px;font-size:7px;font-weight:normal;color:#d9dae0;transform:translate3d(0.00px,0.10px,0) scaleX(0.8837);">03:05 Sat 11 Feb</span>
<span class="t" style="left:640px;top:69px;font-size:7.4px;font-weight:bold;color:#c6c7ce;transform:translate3d(0.00px,0.80px,0) scaleX(0.8451);">Not Ready</span>
<span class="t" style="left:695px;top:69px;font-size:7.3px;font-weight:bold;color:#cfd0d6;transform:translate3d(0.90px,0.30px,0) scaleX(0.8779);">2 / 2 Reviewed</span>
<span class="t" style="left:846px;top:69px;font-size:8.6px;font-weight:normal;color:#cfbec7;transform:translate3d(0.70px,0.47px,0) scaleX(0.8921);-webkit-text-stroke:0.15px #cfbec7;">MB</span>
<span class="t" style="left:180px;top:101px;font-size:6.6px;font-weight:bold;color:#c9cad1;transform:translate3d(0.90px,0.85px,0) scaleX(0.9360);">Main Site</span>
<span class="t" style="left:320px;top:101px;font-size:6.6px;font-weight:bold;color:#c9cad1;transform:translate3d(0.40px,0.85px,0) scaleX(0.9063);">All Tasks</span>
<span class="t" style="left:396px;top:101px;font-size:6.6px;font-weight:bold;color:#c9cad1;transform:translate3d(0.20px,0.85px,0) scaleX(0.9157);">Owner</span>
<span class="t" style="left:464px;top:101px;font-size:6.6px;font-weight:bold;color:#c9cad1;transform:translate3d(0.10px,0.85px,0) scaleX(0.9399);">Overlays</span>
<span class="t" style="left:679px;top:101px;font-size:6.6px;font-weight:bold;color:#c9cad1;transform:translate3d(0.30px,0.85px,0) scaleX(0.9491);">Thu 2, Feb, 2023</span>
<span class="t" style="left:749px;top:101px;font-size:6.6px;font-weight:bold;color:#c9cad1;transform:translate3d(0.60px,0.85px,0) scaleX(0.9560);">Wed 8, Feb, 2023</span>
<span class="t" style="left:285px;top:132px;font-size:7.2px;font-weight:normal;color:#8587a6;transform:translate3d(0.90px,0.00px,0) scaleX(0.8599);">Personal</span>
<span class="t" style="left:301px;top:156px;font-size:7.6px;font-weight:bold;color:#1c204d;transform:translate3d(0.20px,0.30px,0) scaleX(0.7814);">Account Settings</span>
<span class="t" style="left:287px;top:157px;font-size:5.5px;font-weight:bold;color:#ffffff;transform:translate3d(0.30px,0.94px,0) scaleX(1.0014);">M</span>
<span class="t" style="left:298px;top:182px;font-size:7.6px;font-weight:bold;color:#ffffff;transform:translate3d(0.10px,0.00px,0) scaleX(0.8116);">Notification Preferences</span>
<span class="t" style="left:433px;top:151px;font-size:10.1px;font-weight:bold;color:#171a4a;transform:translate3d(0.30px,0.64px,0) scaleX(0.9473);">Notification Preferences</span>
<span class="t" style="left:433px;top:175px;font-size:9.6px;font-weight:bold;color:#171a4a;transform:translate3d(0.30px,0.35px,0) scaleX(0.8372);">Communication</span>
<span class="t" style="left:433px;top:285px;font-size:9.6px;font-weight:bold;color:#171a4a;transform:translate3d(0.30px,0.75px,0) scaleX(0.8353);">Status Events</span>
<span class="t" style="left:433px;top:373px;font-size:9.6px;font-weight:bold;color:#171a4a;transform:translate3d(0.30px,0.75px,0) scaleX(0.8305);">Backlog</span>
<span class="t" style="left:433px;top:439px;font-size:9.6px;font-weight:bold;color:#171a4a;transform:translate3d(0.30px,0.55px,0) scaleX(0.8271);">Readying Plans</span>
<span class="t" style="left:433px;top:204px;font-size:6.9px;font-weight:normal;color:#6f7296;transform:translate3d(0.30px,0.10px,0) scaleX(0.9263);">Mentions in a comment</span>
<span class="t" style="left:433px;top:226px;font-size:6.9px;font-weight:normal;color:#6f7296;transform:translate3d(0.30px,0.30px,0) scaleX(0.9181);">Mentions in a note</span>
<span class="t" style="left:433px;top:248px;font-size:6.9px;font-weight:normal;color:#6f7296;transform:translate3d(0.30px,0.70px,0) scaleX(0.9155);">Comments on Owned or Assigned tasks</span>
<span class="t" style="left:433px;top:314px;font-size:6.9px;font-weight:normal;color:#6f7296;transform:translate3d(0.30px,0.30px,0) scaleX(0.9047);">Delays on Owned or Assigned tasks</span>
<span class="t" style="left:433px;top:337px;font-size:6.9px;font-weight:normal;color:#6f7296;transform:translate3d(0.30px,0.00px,0) scaleX(0.9160);">Shortened or Finished Early on Owned or Assigned tasks</span>
<span class="t" style="left:433px;top:402px;font-size:6.9px;font-weight:normal;color:#6f7296;transform:translate3d(0.30px,0.70px,0) scaleX(0.9186);">Work added to your backlog</span>
<span class="t" style="left:433px;top:468px;font-size:6.9px;font-weight:normal;color:#6f7296;transform:translate3d(0.30px,0.00px,0) scaleX(0.9123);">Send reminder to Ready my plan</span>
<span class="t" style="left:647px;top:177px;font-size:5.6px;font-weight:normal;color:#777a9c;transform:translate3d(0.10px,0.90px,0) scaleX(0.9524);">Mobile</span>
<span class="t" style="left:647px;top:288px;font-size:5.6px;font-weight:normal;color:#777a9c;transform:translate3d(0.10px,0.30px,0) scaleX(0.9524);">Mobile</span>
<span class="t" style="left:701px;top:177px;font-size:5.6px;font-weight:normal;color:#777a9c;transform:translate3d(0.00px,0.90px,0) scaleX(0.9286);">Email</span>
<span class="t" style="left:701px;top:288px;font-size:5.6px;font-weight:normal;color:#777a9c;transform:translate3d(0.00px,0.30px,0) scaleX(0.9286);">Email</span>
<span class="t" style="left:701px;top:376px;font-size:5.6px;font-weight:normal;color:#777a9c;transform:translate3d(0.00px,0.30px,0) scaleX(0.9286);">Email</span>
<span class="t" style="left:701px;top:441px;font-size:5.6px;font-weight:normal;color:#777a9c;transform:translate3d(0.00px,0.90px,0) scaleX(0.9286);">Email</span>
</body>
</html>
